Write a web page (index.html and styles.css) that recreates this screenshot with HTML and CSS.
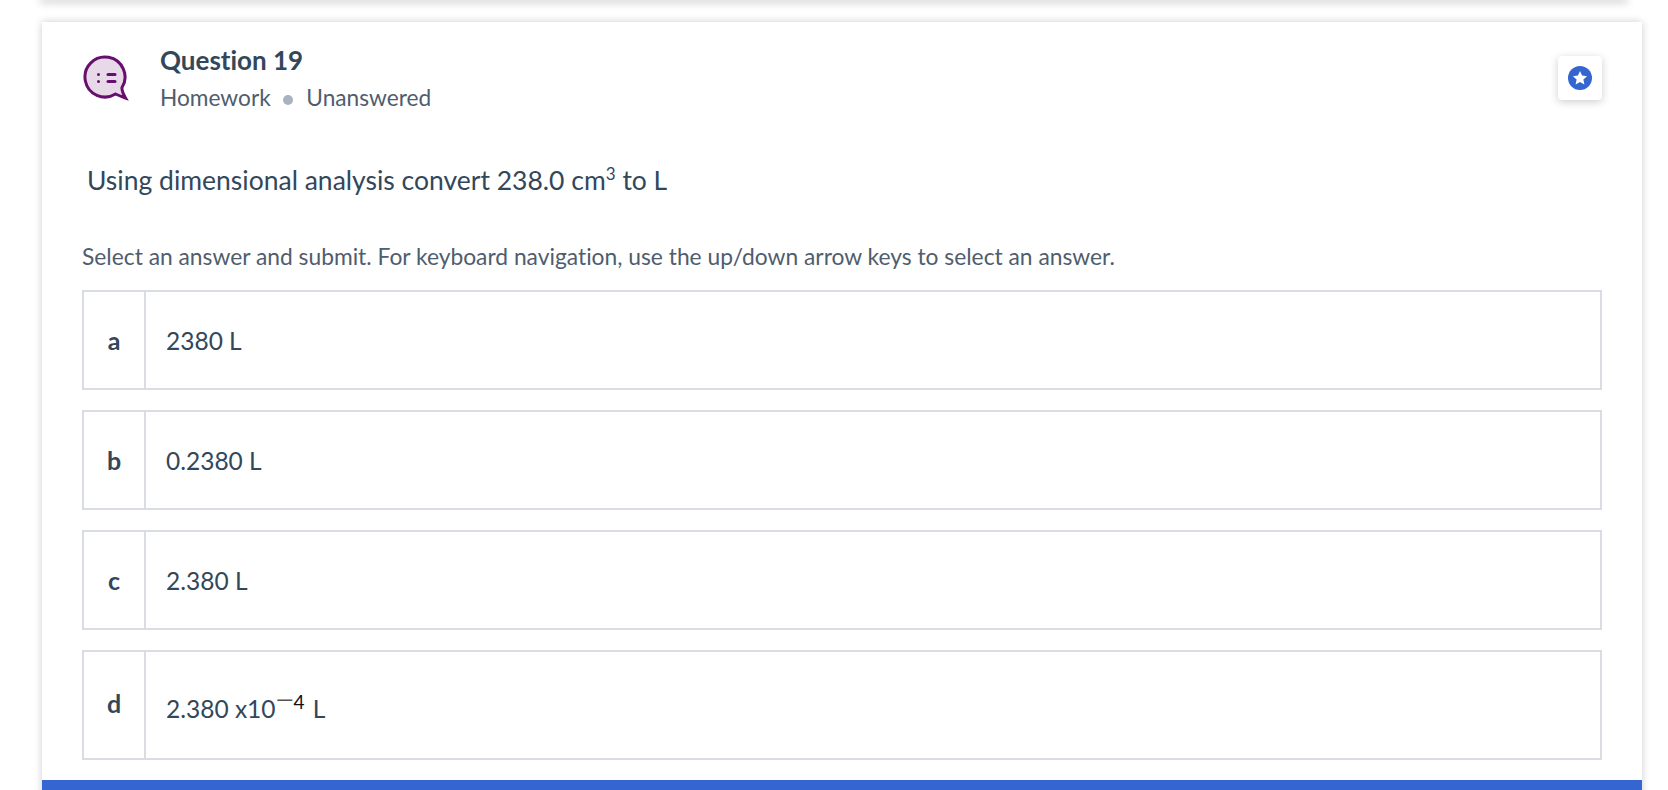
FILE: index.html
```html
<!DOCTYPE html>
<html lang="en">
<head>
  <meta charset="UTF-8">
  <title>Question 19</title>
  <link rel="stylesheet" href="styles.css">
</head>
<body>
  <div class="prev-card"></div>

  <section class="card">
    <header class="card-head">
      <svg class="q-icon" width="48" height="48" viewBox="0 0 48 48">
        <path d="M33.500 40A20 20 0 1 1 40 33.500Q39.500 37 43.500 44Q38 42 33.500 40z" fill="#e8d9e9" stroke="#670f6e" stroke-width="3" stroke-linejoin="miter"/>
        <rect x="15" y="19" width="3" height="3" rx="1.500" fill="#670f6e"/>
        <rect x="15" y="26" width="3" height="3" rx="1.500" fill="#670f6e"/>
        <rect x="24.500" y="19" width="10" height="3" rx="1.500" fill="#670f6e"/>
        <rect x="24.500" y="26" width="10" height="3" rx="1.500" fill="#670f6e"/>
      </svg>
      <div class="q-title">
        <h2>Question 19</h2>
        <p>Homework <span class="dot"></span> Unanswered</p>
      </div>
      <button class="star-btn">
        <svg width="24" height="24" viewBox="0 0 24 24">
          <circle cx="12" cy="12" r="12" fill="#3465d1"/>
          <path d="M12 5l2.100 4.600 5 .6-3.700 3.400 1 4.900L12 16.100l-4.400 2.400 1-4.900-3.700-3.400 5-.6z" fill="#fff"/>
        </svg>
      </button>
    </header>

    <p class="q-text">Using dimensional analysis convert 238.0 cm<sup>3</sup> to L</p>
    <p class="hint">Select an answer and submit. For keyboard navigation, use the up/down arrow keys to select an answer.</p>

    <div class="answers">
      <div class="answer"><div class="letter">a</div><div class="value">2380 L</div></div>
      <div class="answer"><div class="letter">b</div><div class="value">0.2380 L</div></div>
      <div class="answer"><div class="letter">c</div><div class="value">2.380 L</div></div>
      <div class="answer tall"><div class="letter">d</div><div class="value">2.380 x10<span class="exp"><span class="minus">&minus;</span>4</span> L</div></div>
    </div>

    <div class="submit-bar"></div>
  </section>
</body>
</html>
```

FILE: styles.css
```css
*{margin:0;padding:0;box-sizing:border-box;}
html,body{
  height:790px;
  overflow:hidden;
  background:#fff;
  font-family:"Lato","Noto Sans",sans-serif;
  font-variant-ligatures:none;
  color:#33475a;
}
.prev-card{
  height:0;
  margin:0 42px;
  box-shadow:0 0 8px 2px rgba(0,0,0,.28);
}
.card{
  margin:22px 26px 0 42px;
  background:#fff;
  box-shadow:0 0 8px rgba(0,0,0,.2);
  padding:0 40px;
  height:800px;
}
.card-head{
  display:flex;
  align-items:flex-start;
  height:118px;
  padding-top:24px;
}
.q-icon{margin-top:8px;}
.q-title{margin:-2px 0 0 30px;flex:1;}
.q-title h2{font-size:26px;font-weight:700;line-height:32px;}
.q-title p{font-size:22.700px;line-height:32px;margin-top:6px;color:#4f5d6e;}
.dot{
  display:inline-block;
  width:10px; height:10px;
  margin:0 7px;
  border-radius:50%;
  background:#a8b3bf;
  vertical-align:middle;
}
.star-btn{
  width:44px; height:44px;
  margin-top:10px;
  border:none; border-radius:4px;
  background:#fff;
  box-shadow:0 2px 8px rgba(0,0,0,.2);
  display:flex; align-items:center; justify-content:center;
}
.q-text{
  margin:22px 0 0 5px;
  font-size:26.500px;
  line-height:36px;
}
.q-text sup{font-size:17px;line-height:0;}
.hint{
  margin-top:43px;
  font-size:22.800px;
  line-height:30px;
  color:#4f5d6e;
}
.answers{
  margin-top:19px;
  display:flex;
  flex-direction:column;
  gap:20px;
}
.answer{
  display:flex;
  height:100px;
  border:2px solid #d9dde3;
}
.answer.tall{height:110px;}
.letter{
  width:62px;
  border-right:2px solid #d9dde3;
  display:flex; align-items:center; justify-content:center;
  font-size:25px;
  font-weight:700;
}
.answer.tall .letter{padding-bottom:4px;}
.value{
  display:flex; align-items:center;
  padding-left:20px;
  font-size:24.500px;
  white-space:pre;
}
.answer.tall .value{padding-top:6px;}
.exp{
  font-size:19px;
  color:#111;
  margin:-14px 2px 0 0;
}
.minus{
  font-family:"Liberation Serif",serif;
  font-size:32px;
  line-height:0;
  color:#555;
  vertical-align:-2px;
}
.submit-bar{
  margin-top:20px;
  margin-left:-40px; margin-right:-40px;
  height:60px;
  background:#3465d1;
}
```
